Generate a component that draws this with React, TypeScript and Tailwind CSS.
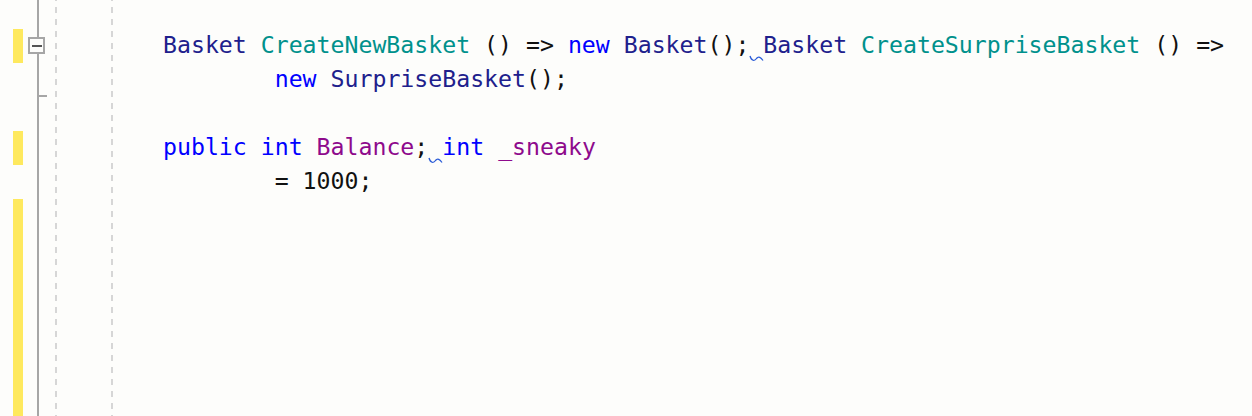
import React from "react";

const mono = "font-['DejaVu_Sans_Mono','Liberation_Mono',monospace]";

const Squiggle = () => (
  <span className="relative inline-block">
    {" "}
    <svg
      className="absolute left-0 top-[27px]"
      width="15"
      height="7"
      viewBox="0 0 15 7"
      fill="none"
    >
      <path
        d="M1 1 C2.5 6 5.5 6.5 7.5 3.5 C9.5 0.8 12 2.5 14 5.5"
        stroke="#2a5bd7"
        strokeWidth="1.3"
      />
    </svg>
  </span>
);

const Type = ({ children }: { children: React.ReactNode }) => (
  <span className="text-[#20208c]">{children}</span>
);
const Method = ({ children }: { children: React.ReactNode }) => (
  <span className="text-[#00918c]">{children}</span>
);
const Kw = ({ children }: { children: React.ReactNode }) => (
  <span className="text-[#0000ff]">{children}</span>
);
const Field = ({ children }: { children: React.ReactNode }) => (
  <span className="text-[#8e0a8c]">{children}</span>
);

const Guide = () => (
  <div className="w-[2px] h-full bg-[linear-gradient(#d6d6d6_50%,transparent_50%)] bg-[length:2px_12px] bg-[position:0_7px]" />
);

const App = () => {
  return (
    <div className="h-[416px] w-[1252px] overflow-hidden bg-[#fdfdfb] flex">
      {/* change markers */}
      <div className="ml-[13px] w-[10px] flex flex-col pt-[29px]">
        <div className="h-[34px] bg-[#fee95e]" />
        <div className="h-[68px]" />
        <div className="h-[34px] bg-[#fee95e]" />
        <div className="h-[34px]" />
        <div className="flex-1 bg-[#fee95e]" />
      </div>

      {/* outlining margin */}
      <div className="ml-[5px] w-[18px] flex flex-col">
        <div className="ml-[9px] w-[2px] h-[37px] bg-[#a6a6a6]" />
        <div className="w-[17px] h-[17px] border-2 border-[#a6a6a6] flex items-center justify-center">
          <div className="w-[10px] h-[2px] bg-[#555555]" />
        </div>
        <div className="ml-[9px] w-[2px] h-[41px] bg-[#a6a6a6]" />
        <div className="ml-[9px] w-[10px] h-[2px] bg-[#a6a6a6]" />
        <div className="ml-[9px] w-[2px] flex-1 bg-[#a6a6a6]" />
      </div>

      {/* indent guides */}
      <div className="ml-[9px]">
        <Guide />
      </div>
      <div className="ml-[54px]">
        <Guide />
      </div>

      {/* code */}
      <div
        className={`${mono} ml-[50px] pt-[28px] text-[23.2px] leading-[34px] text-[#111111] whitespace-pre`}
      >
        <div>
          <Type>Basket</Type> <Method>CreateNewBasket</Method> () =&gt;{" "}
          <Kw>new</Kw> <Type>Basket</Type>();
          <Squiggle />
          <Type>Basket</Type> <Method>CreateSurpriseBasket</Method> () =&gt;
        </div>
        <div>
          {"        "}
          <Kw>new</Kw> <Type>SurpriseBasket</Type>();
        </div>
        <div>{" "}</div>
        <div>
          <Kw>public</Kw> <Kw>int</Kw> <Field>Balance</Field>;
          <Squiggle />
          <Kw>int</Kw> <Field>_sneaky</Field>
        </div>
        <div>{"        "}= 1000;</div>
      </div>
    </div>
  );
};

export default App;
